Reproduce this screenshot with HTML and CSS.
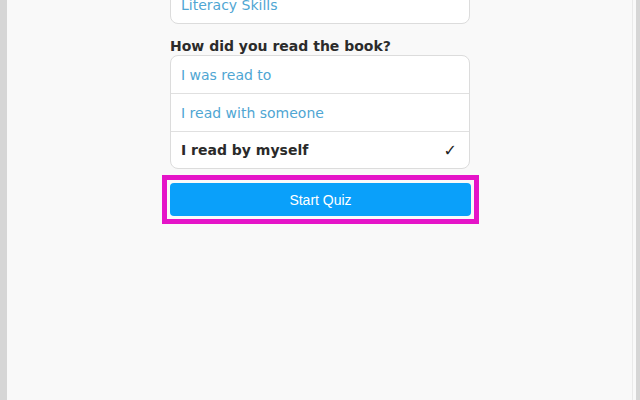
FILE: index.html
```html
<!DOCTYPE html>
<html>
<head>
<meta charset="utf-8">
<link rel="stylesheet" href="styles.css">
</head>
<body>
<div class="frame">
  <div class="edge-left"></div>
  <main class="page">
    <div class="form">
      <div class="card">
        <div class="row row-option">Literacy Skills</div>
      </div>
      <div class="label">How did you read the book?</div>
      <div class="card">
        <div class="row row-option">I was read to</div>
        <div class="row row-option">I read with someone</div>
        <div class="row row-selected"><span>I read by myself</span><span class="check">✓</span></div>
      </div>
      <div class="highlight">
        <button class="start">Start Quiz</button>
      </div>
    </div>
  </main>
  <div class="edge-right"><div class="edge-line"></div><div class="edge-bar"></div></div>
</div>
</body>
</html>
```
FILE: styles.css
```css
html, body {
  margin: 0;
  padding: 0;
  height: 100%;
  overflow: hidden;
}
body {
  background: #f9f9f9;
  font-family: "DejaVu Sans", Verdana, sans-serif;
}
.frame {
  display: flex;
  height: 400px;
}
.edge-left {
  width: 7px;
  background: #d6d6d6;
  flex: none;
}
.page {
  flex: 1;
  display: flex;
  justify-content: center;
}
.edge-right {
  display: flex;
  flex: none;
  width: 8px;
}
.edge-line {
  width: 1px;
  background: #e9e9e9;
}
.edge-bar {
  margin-left: 3px;
  width: 4px;
  background: #d6d6d6;
}
.form {
  width: 300px;
  margin-top: -14px;
  margin-left: 1px;
  display: flex;
  flex-direction: column;
}
.card {
  background: #fff;
  border: 1px solid #dcdcdc;
  border-radius: 8px;
}
.row {
  height: 37px;
  display: flex;
  align-items: center;
  justify-content: space-between;
  padding: 0 12px 0 10px;
  font-size: 14px;
  border-bottom: 1px solid #e0e0e0;
}
.row:last-child {
  border-bottom: none;
  height: 36px;
}
.row-option {
  color: #4fa6d3;
}
.row-selected {
  color: #2a2a2a;
  font-weight: bold;
}
.check {
  font-weight: normal;
  font-size: 16px;
  color: #222;
}
.label {
  margin-top: 13px;
  height: 18px;
  line-height: 18px;
  font-size: 14px;
  font-weight: bold;
  color: #2b2b2b;
}
.highlight {
  margin: 6px -9px 0 -8px;
  border: 5px solid #e514c8;
  padding: 3px;
}
.start {
  display: block;
  width: 100%;
  height: 33px;
  border: none;
  border-radius: 4px;
  background: #0aa0fa;
  color: #fff;
  font-family: "Liberation Sans", Arial, sans-serif;
  font-size: 14px;
  padding: 0;
}
```
